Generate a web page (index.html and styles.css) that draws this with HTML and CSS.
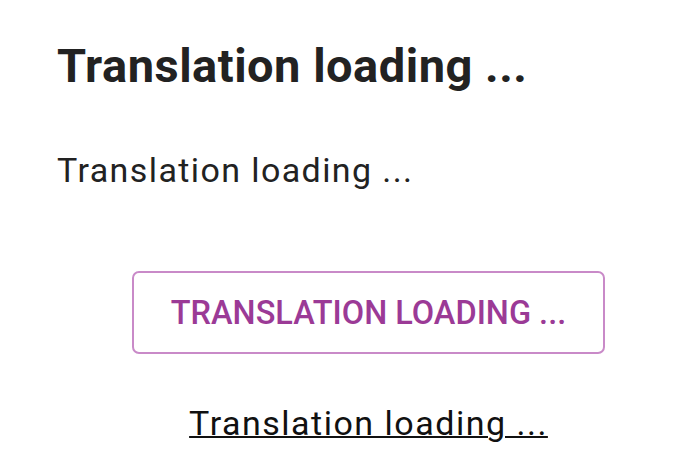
FILE: index.html
```html
<!DOCTYPE html>
<html lang="en">
<head>
	<meta charset="UTF-8">
	<title>Translation loading ...</title>
	<link rel="stylesheet" href="styles.css">
</head>
<body>
<div class="page">
	<h1 class="title">Translation loading ...</h1>
	<p class="intro">Translation loading ...</p>
	<div class="actions">
		<button class="btn-outline" type="button">Translation loading ...</button>
		<a class="link" href="#">Translation loading ...</a>
	</div>
</div>
</body>
</html>
```

FILE: styles.css
```css
body{
	margin: 0;
	padding: 0;
	background: #fff;
	font-family: Roboto, "Noto Sans", sans-serif;
	color: #222;
}
.page{
	padding: 34px 20px 0 57px;
}
.title{
	margin: 0;
	font-size: 47px;
	font-weight: 700;
	line-height: 64px;
	letter-spacing: 0.5px;
	color: #222;
}
.intro{
	margin: 50px 0 0;
	font-size: 34px;
	line-height: 44px;
	letter-spacing: 1.4px;
}
.actions{
	display: flex;
	flex-direction: column;
	align-items: center;
	margin-top: 79px;
}
.btn-outline{
	width: 473px;
	height: 83px;
	background: #fff;
	border: 2px solid #c98ac8;
	border-radius: 7px;
	font-family: Roboto, "Noto Sans", sans-serif;
	font-size: 32.5px;
	font-weight: 500;
	text-transform: uppercase;
	color: #9b3a96;
	cursor: pointer;
}
.link{
	margin-top: 47px;
	font-size: 34px;
	line-height: 44px;
	letter-spacing: 1.5px;
	color: #111;
	text-decoration: underline;
	text-decoration-thickness: 2px;
}
```
